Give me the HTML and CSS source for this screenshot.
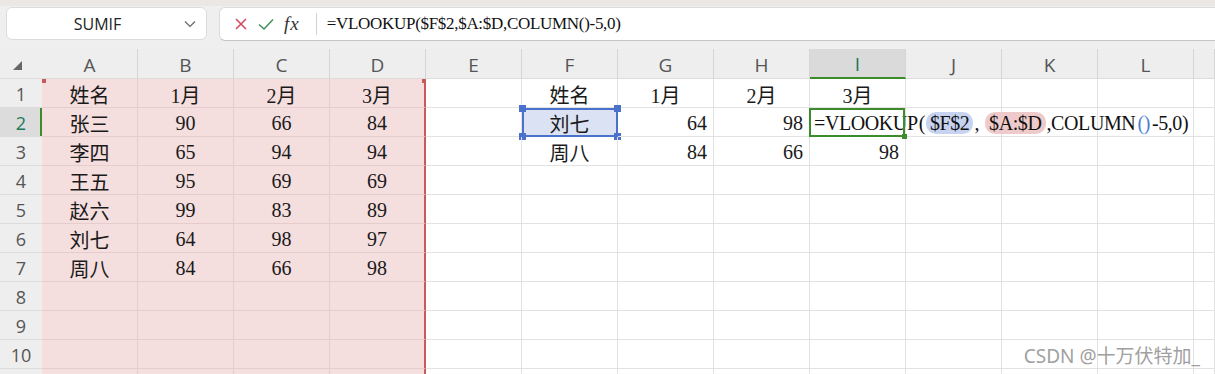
FILE: index.html
```html
<!DOCTYPE html>
<html lang="zh-CN">
<head>
    <meta charset="UTF-8">
    <title>VLOOKUP</title>
    <link rel="stylesheet" href="styles.css">
</head>
<body>
    <div class="topbar">
        <div class="name-box">
            <span class="name-text">SUMIF</span>
            <svg class="chevron" width="12" height="8" viewBox="0 0 12 8"><path d="M1 1.5 L6 6.5 L11 1.5" fill="none" stroke="#666" stroke-width="1.2"/></svg>
        </div>
        <div class="formula-box">
            <svg class="icon" width="16" height="16" viewBox="0 0 16 16"><path d="M3 3 L13 13 M13 3 L3 13" stroke="#d2475c" stroke-width="1.5" fill="none"/></svg>
            <svg class="icon" width="18" height="16" viewBox="0 0 18 16"><path d="M2 8.5 L7 13 L16 3.5" stroke="#3f8f5a" stroke-width="1.5" fill="none"/></svg>
            <span class="fx"><i>f</i><i>x</i></span>
            <span class="divider"></span>
            <span class="formula-text">=VLOOKUP($F$2,$A:$D,COLUMN()-5,0)</span>
        </div>
    </div>

    <div class="sheet" id="sheet"></div>
    <div class="watermark">CSDN @十万伏特加_</div>

    <script>
        const cols = ['A','B','C','D','E','F','G','H','I','J','K','L','M'];
        const data = {
            A1:'姓名', B1:'1月', C1:'2月', D1:'3月',
            A2:'张三', B2:'90', C2:'66', D2:'84',
            A3:'李四', B3:'65', C3:'94', D3:'94',
            A4:'王五', B4:'95', C4:'69', D4:'69',
            A5:'赵六', B5:'99', C5:'83', D5:'89',
            A6:'刘七', B6:'64', C6:'98', D6:'97',
            A7:'周八', B7:'84', C7:'66', D7:'98',
            F1:'姓名', G1:'1月', H1:'2月', I1:'3月',
            F2:'刘七', G2:'64', H2:'98',
            F3:'周八', G3:'84', H3:'66', I3:'98'
        };
        const rightAligned = ['G2','H2','G3','H3','I3'];
        const sheet = document.getElementById('sheet');

        function cell(cls, html) {
            const d = document.createElement('div');
            d.className = cls;
            d.innerHTML = html || '';
            sheet.appendChild(d);
            return d;
        }

        // header row (M is only partly visible, so no letter)
        cell('corner', '<span class="corner-tri"></span>');
        cols.forEach(c => cell('col-head' + (c === 'I' ? ' active' : ''), c === 'M' ? '' : c));

        // body rows (row 11 only shows its top edge)
        for (let r = 1; r <= 11; r++) {
            cell('row-head' + (r === 2 ? ' active' : ''), r === 11 ? '' : r);
            cols.forEach((c, i) => {
                const ref = c + r;
                let cls = 'cell';
                if (i < 4) cls += ' pink';
                if (c === 'D') cls += ' edge';
                if (rightAligned.includes(ref)) cls += ' right';
                if (ref === 'F2') cls += ' selected';
                if (ref === 'I2') cls += ' editing';
                if (ref === 'A1') cls += ' mark-left';
                if (ref === 'D1') cls += ' mark-right';
                let html = data[ref] || '';
                if (ref === 'I2') {
                    html = '<span class="edit-text">=VLOOKUP<span class="paren">(</span><span class="pill blue">$F$2</span>,<span class="pill red">$A:$D</span>,COLUMN<span class="paren blue-txt">()</span>-5,0)</span>';
                }
                cell(cls, html);
            });
        }
    </script>
</body>
</html>
```

FILE: styles.css
```css
* {
    margin: 0;
    padding: 0;
    box-sizing: border-box;
}

body {
    width: 1215px;
    height: 374px;
    overflow: hidden;
    background: #ffffff;
    font-family: 'Liberation Serif', 'Noto Sans CJK SC', serif;
    position: relative;
}

.topbar {
    height: 49px;
    background: #efefef;
    border-top: 6px solid #ebe7e4;
    display: flex;
    align-items: flex-start;
    padding: 1px 0 0 6px;
    gap: 12px;
}

.name-box {
    width: 201px;
    height: 33px;
    background: #fff;
    border: 1px solid #dcdcdc;
    border-radius: 6px;
    display: flex;
    align-items: center;
    padding: 0 10px 0 0;
}

.name-text {
    flex: 1;
    text-align: center;
    font-family: 'Open Sans', 'Liberation Sans', sans-serif;
    font-size: 16px;
    color: #222;
    padding-left: 4px;
}

.formula-box {
    flex: 1;
    height: 34px;
    background: #fff;
    border: 1px solid #dcdcdc;
    border-right: none;
    border-bottom: 1px solid #c4c4c4;
    border-radius: 6px 0 0 6px;
    display: flex;
    align-items: center;
    padding-left: 13px;
    gap: 8px;
}

.fx {
    font-family: 'Liberation Serif', serif;
    font-size: 19px;
    color: #333;
    margin-left: 1px;
    letter-spacing: 1px;
}

.divider {
    width: 1px;
    height: 22px;
    background: #d0d0d0;
    margin-left: 8px;
}

.formula-text {
    font-size: 17px;
    color: #111;
    margin-left: 2px;
    letter-spacing: -0.3px;
}

.sheet {
    display: grid;
    grid-template-columns: 42px repeat(12, 96px) 21px;
    grid-template-rows: 30px repeat(11, 29px);
}

.corner,
.col-head,
.row-head {
    background: #eeeeee;
    color: #555;
    font-family: 'Open Sans', 'Noto Sans', sans-serif;
    display: flex;
    align-items: center;
    justify-content: center;
}

.corner {
    border-bottom: 1px solid #dcdcdc;
}

.corner-tri {
    width: 0;
    height: 0;
    border-left: 9px solid transparent;
    border-bottom: 9px solid #666;
    margin: 4px 8px 0 0;
}

.col-head {
    font-size: 19px;
    border-bottom: 1px solid #dcdcdc;
    border-right: 1px solid #d6d6d6;
    padding-top: 2px;
}

.col-head.active {
    background: #dadada;
    color: #1d7a58;
    border-bottom: 2px solid #3c8c2e;
}

.row-head {
    font-size: 18px;
    border-bottom: 1px solid #dcdcdc;
    padding-top: 1px;
}

.row-head.active {
    background: #dcdcdc;
    color: #1d7a58;
    box-shadow: inset -2px 0 0 #3c8c2e;
}

.cell {
    border-right: 1px solid #e2e2e2;
    border-bottom: 1px solid #e2e2e2;
    font-size: 20px;
    color: #1a1a1a;
    display: flex;
    align-items: center;
    justify-content: center;
    padding-top: 3px;
    white-space: nowrap;
    position: relative;
}

.cell.right {
    justify-content: flex-end;
    padding-right: 6px;
}

.cell.pink {
    background: #f5dede;
    border-color: #e7cccc;
}

.cell.edge {
    border-right: 2px solid #c95a5c;
}

.cell.mark-left::before,
.cell.mark-right::before {
    content: '';
    position: absolute;
    top: 0;
    width: 4px;
    height: 4px;
    background: #c95a5c;
}

.cell.mark-left::before { left: 0; }
.cell.mark-right::before { right: -2px; }

.cell.selected {
    background: #dbe2f4;
}

.cell.selected::before {
    content: '';
    position: absolute;
    inset: 0 -1px -1px 0;
    border: 2px solid #4a72cc;
}

.cell.selected::after {
    content: '';
    position: absolute;
    inset: -3px -4px -4px -3px;
    background:
        linear-gradient(#4a72cc, #4a72cc) top left / 7px 7px no-repeat,
        linear-gradient(#4a72cc, #4a72cc) top right / 7px 7px no-repeat,
        linear-gradient(#4a72cc, #4a72cc) bottom left / 7px 7px no-repeat,
        linear-gradient(#4a72cc, #4a72cc) bottom right / 7px 7px no-repeat;
}

.cell.editing {
    justify-content: flex-start;
    overflow: visible;
    z-index: 2;
}

.cell.editing::before {
    content: '';
    position: absolute;
    inset: 0 0 -1px -1px;
    border: 2px solid #3c8c2e;
    pointer-events: none;
}

.cell.editing::after {
    content: '';
    position: absolute;
    right: -2px;
    bottom: -3px;
    width: 5px;
    height: 5px;
    background: #3c8c2e;
}

.edit-text {
    padding-left: 4px;
    font-size: 20px;
    color: #111;
    letter-spacing: -0.4px;
}

.paren {
    margin: 0 1px 0 1px;
}

.pill {
    border-radius: 10px;
    padding: 0 4px;
    margin-right: 1px;
}

.pill.blue { background: #c7d3f0; }
.pill.red { background: #efcaca; margin-left: 6px; }

.blue-txt {
    color: #4a7fd0;
    margin: 0 2px;
}

.watermark {
    position: absolute;
    right: 15px;
    bottom: 5px;
    font-family: 'Noto Sans', 'Noto Sans CJK SC', sans-serif;
    font-size: 19px;
    color: #a0a0a0;
}
```
